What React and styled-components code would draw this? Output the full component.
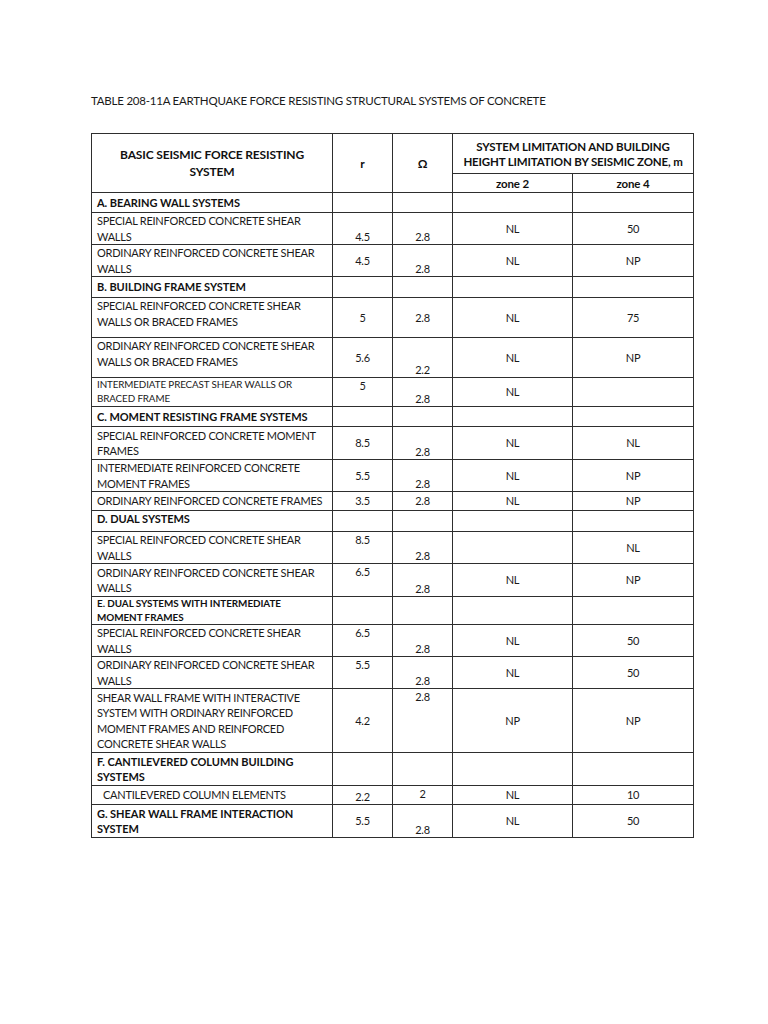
import React from "react"
import styled, { createGlobalStyle } from "styled-components"

const GlobalStyle = createGlobalStyle`
  html, body {
    margin: 0;
    padding: 0;
    background: #fff;
  }
  body {
    font-family: Lato, "Open Sans", sans-serif;
    color: #222;
  }
`

const Page = styled.div`
  width: 768px;
  min-height: 1024px;
  box-sizing: border-box;
  padding: 93px 0 0 91px;
  background: #fff;
`

const Title = styled.h1`
  margin: 0 0 24px;
  font-size: 11.5px;
  font-weight: 400;
  line-height: 16px;
  letter-spacing: -0.22px;
  color: #1a1a1a;
`

const Table = styled.table`
  border-collapse: collapse;
  table-layout: fixed;
  width: 602px;
`

const Row = styled.tr`
  height: ${p => p.$h}px;
`

const Cell = styled.td`
  border: 1px solid #2e2e2e;
  padding: ${p => (p.$center ? "0 2px" : p.$indent ? "0 4px 0 11px" : "0 4px 0 5px")};
  vertical-align: ${p => p.$v || "middle"};
  text-align: ${p => (p.$center ? "center" : "left")};
  font-size: ${p => (p.$small ? (p.$bold ? "9.9px" : "9.8px") : "11px")};
  font-weight: ${p => (p.$bold ? 700 : 400)};
  line-height: ${p => (p.$small ? "13.5px" : "15.5px")};
  letter-spacing: ${p => (p.$bold ? "-0.05px" : p.$small ? "-0.1px" : "-0.25px")};
  white-space: nowrap;
  color: ${p => (p.$bold ? "#111" : "#1a1a1a")};
`

const HeadCell = styled.th`
  border: 1px solid #2e2e2e;
  padding: 0 2px;
  vertical-align: middle;
  text-align: center;
  font-size: ${p => (p.$tight ? "11.5px" : "12px")};
  font-weight: 700;
  line-height: ${p => (p.$tight ? "15px" : "17px")};
  letter-spacing: -0.15px;
  white-space: nowrap;
  color: #111;
`

const Lines = ({ lines }) =>
  lines.map((l, i) => (
    <React.Fragment key={i}>
      {i > 0 && <br />}
      {l}
    </React.Fragment>
  ))

const rows = [
  { h: 20, head: true, label: ["A. BEARING WALL SYSTEMS"] },
  { h: 32, label: ["SPECIAL REINFORCED CONCRETE SHEAR", "WALLS"], r: ["4.5", "bottom"], o: ["2.8", "bottom"], z2: ["NL"], z4: ["50"] },
  { h: 32, label: ["ORDINARY REINFORCED CONCRETE SHEAR", "WALLS"], r: ["4.5"], o: ["2.8", "bottom"], z2: ["NL"], z4: ["NP"] },
  { h: 21, head: true, label: ["B. BUILDING FRAME SYSTEM"] },
  { h: 40, v: "top", label: ["SPECIAL REINFORCED CONCRETE SHEAR", "WALLS OR BRACED FRAMES"], r: ["5"], o: ["2.8"], z2: ["NL"], z4: ["75"] },
  { h: 40, v: "top", label: ["ORDINARY REINFORCED CONCRETE SHEAR", "WALLS OR BRACED FRAMES"], r: ["5.6"], o: ["2.2", "bottom"], z2: ["NL"], z4: ["NP"] },
  { h: 29, v: "top", small: true, label: ["INTERMEDIATE PRECAST SHEAR WALLS OR", "BRACED FRAME"], r: ["5", "top"], o: ["2.8", "bottom"], z2: ["NL"] },
  { h: 20, head: true, label: ["C. MOMENT RESISTING FRAME SYSTEMS"] },
  { h: 33, label: ["SPECIAL REINFORCED CONCRETE MOMENT", "FRAMES"], r: ["8.5"], o: ["2.8", "bottom"], z2: ["NL"], z4: ["NL"] },
  { h: 32, label: ["INTERMEDIATE REINFORCED CONCRETE", "MOMENT FRAMES"], r: ["5.5"], o: ["2.8", "bottom"], z2: ["NL"], z4: ["NP"] },
  { h: 19, label: ["ORDINARY REINFORCED CONCRETE FRAMES"], r: ["3.5"], o: ["2.8"], z2: ["NL"], z4: ["NP"] },
  { h: 21, head: true, v: "top", label: ["D. DUAL SYSTEMS"] },
  { h: 32, label: ["SPECIAL REINFORCED CONCRETE SHEAR", "WALLS"], r: ["8.5", "top"], o: ["2.8", "bottom"], z4: ["NL"] },
  { h: 33, label: ["ORDINARY REINFORCED CONCRETE SHEAR", "WALLS"], r: ["6.5", "top"], o: ["2.8", "bottom"], z2: ["NL"], z4: ["NP"] },
  { h: 28, head: true, small: true, label: ["E. DUAL SYSTEMS WITH INTERMEDIATE", "MOMENT FRAMES"] },
  { h: 32, label: ["SPECIAL REINFORCED CONCRETE SHEAR", "WALLS"], r: ["6.5", "top"], o: ["2.8", "bottom"], z2: ["NL"], z4: ["50"] },
  { h: 32, label: ["ORDINARY REINFORCED CONCRETE SHEAR", "WALLS"], r: ["5.5", "top"], o: ["2.8", "bottom"], z2: ["NL"], z4: ["50"] },
  {
    h: 64,
    label: [
      "SHEAR WALL FRAME WITH INTERACTIVE",
      "SYSTEM WITH ORDINARY REINFORCED",
      "MOMENT FRAMES AND REINFORCED",
      "CONCRETE SHEAR WALLS",
    ],
    r: ["4.2"],
    o: ["2.8", "top"],
    z2: ["NP"],
    z4: ["NP"],
  },
  { h: 33, head: true, label: ["F. CANTILEVERED COLUMN BUILDING", "SYSTEMS"] },
  { h: 19, indent: true, label: ["CANTILEVERED COLUMN ELEMENTS"], r: ["2.2", "bottom"], o: ["2", "top"], z2: ["NL"], z4: ["10"] },
  { h: 33, head: true, label: ["G. SHEAR WALL FRAME INTERACTION", "SYSTEM"], r: ["5.5"], o: ["2.8", "bottom"], z2: ["NL"], z4: ["50"] },
]

const ValueCell = ({ value }) => (
  <Cell $center $v={value ? value[1] : undefined}>
    {value ? value[0] : ""}
  </Cell>
)

export default function App() {
  return (
    <Page>
      <GlobalStyle />
      <Title>TABLE 208-11A EARTHQUAKE FORCE RESISTING STRUCTURAL SYSTEMS OF CONCRETE</Title>
      <Table>
        <colgroup>
          <col style={{ width: 241 }} />
          <col style={{ width: 60 }} />
          <col style={{ width: 60 }} />
          <col style={{ width: 120 }} />
          <col style={{ width: 121 }} />
        </colgroup>
        <thead>
          <Row $h={40}>
            <HeadCell rowSpan={2}>
              BASIC SEISMIC FORCE RESISTING
              <br />
              SYSTEM
            </HeadCell>
            <HeadCell rowSpan={2}>r</HeadCell>
            <HeadCell rowSpan={2}>Ω</HeadCell>
            <HeadCell colSpan={2} $tight>
              SYSTEM LIMITATION AND BUILDING
              <br />
              HEIGHT LIMITATION BY SEISMIC ZONE, m
            </HeadCell>
          </Row>
          <Row $h={19}>
            <HeadCell $tight>zone 2</HeadCell>
            <HeadCell $tight>zone 4</HeadCell>
          </Row>
        </thead>
        <tbody>
          {rows.map((row, i) => (
            <Row key={i} $h={row.h}>
              <Cell $v={row.v} $bold={row.head} $small={row.small} $indent={row.indent}>
                <Lines lines={row.label} />
              </Cell>
              <ValueCell value={row.r} />
              <ValueCell value={row.o} />
              <ValueCell value={row.z2} />
              <ValueCell value={row.z4} />
            </Row>
          ))}
        </tbody>
      </Table>
    </Page>
  )
}
